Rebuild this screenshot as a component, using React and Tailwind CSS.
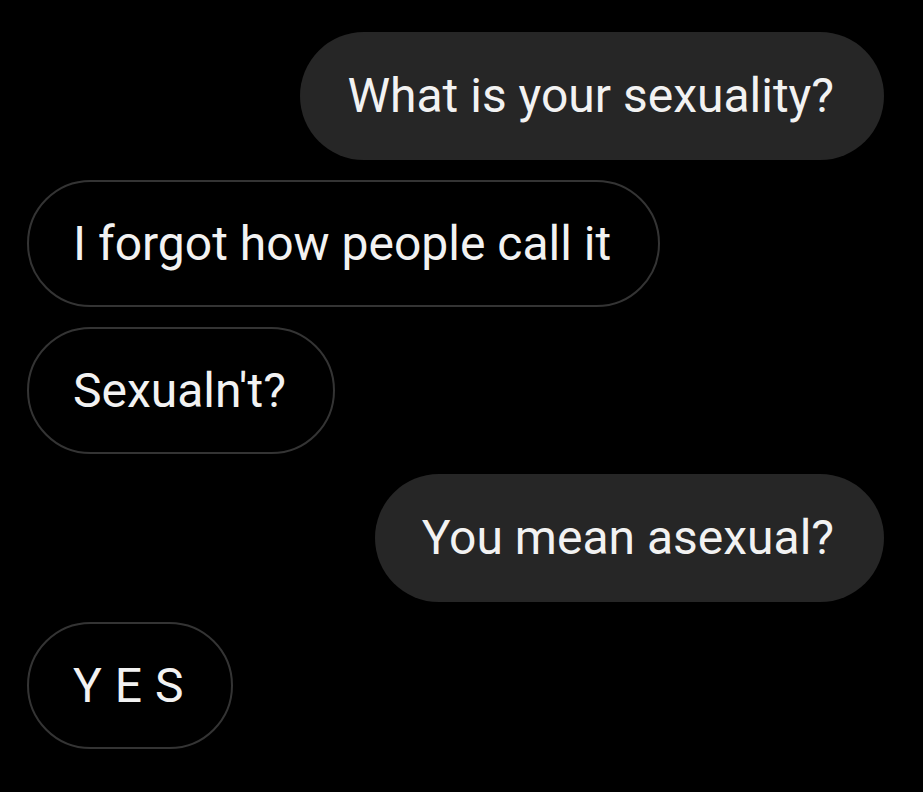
const messages = [
  { side: 'right', text: 'What is your sexuality?' },
  { side: 'left', text: 'I forgot how people call it' },
  { side: 'left', text: "Sexualn't?" },
  { side: 'right', text: 'You mean asexual?' },
  { side: 'left', text: 'YES', spaced: true },
];

export default function App() {
  return (
    <div
      className="min-h-[792px] w-[923px] bg-black pt-[32px] pl-[27px] pr-[39px] flex flex-col gap-[20px]"
      style={{ fontFamily: 'Roboto, "Liberation Sans", sans-serif' }}
    >
      {messages.map((m, i) => (
        <div key={i} className={`flex ${m.side === 'right' ? 'justify-end' : 'justify-start'}`}>
          <div
            className={
              m.side === 'right'
                ? 'h-[128px] flex items-center rounded-full bg-[#262626] pl-[47px] pr-[50px] text-[48px] text-[#f2f2f2]'
                : 'h-[127px] flex items-center rounded-full border-2 border-[#343434] pl-[44px] pr-[47px] text-[48px] text-[#f2f2f2]'
            }
          >
            <span className={m.spaced ? 'tracking-[13px] -mr-[13px]' : ''}>{m.text}</span>
          </div>
        </div>
      ))}
    </div>
  );
}
